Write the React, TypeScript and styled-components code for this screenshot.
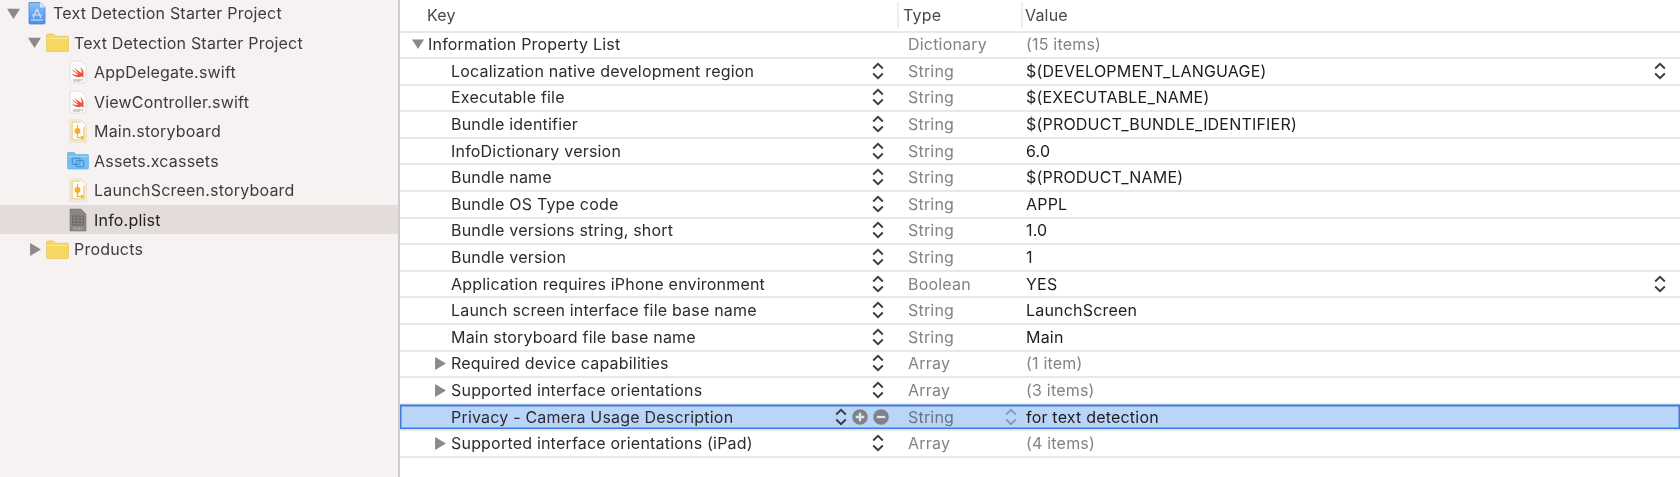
import React from "react";
import styled, { createGlobalStyle } from "styled-components";

const GlobalStyle = createGlobalStyle`
  html, body {
    margin: 0;
    padding: 0;
    background: #fff;
    font-family: "Inter", "Liberation Sans", sans-serif;
  }
`;

type FileKind = "project" | "folder" | "swift" | "storyboard" | "assets" | "plist";

const FileIcon = ({ kind }: { kind: FileKind }) => {
  if (kind === "project") {
    return (
      <svg width="18" height="24" viewBox="0 0 18 24">
        <defs>
          <linearGradient id="projectFill" x1="0" y1="0" x2="0" y2="1">
            <stop offset="0" stopColor="#8cc0f5" />
            <stop offset="1" stopColor="#4d8fe6" />
          </linearGradient>
        </defs>
        <path d="M1 1.5h11l5 5v15.5a1 1 0 0 1-1 1H2a1 1 0 0 1-1-1z" fill="url(#projectFill)" stroke="#4a86d6" strokeWidth="0.8" />
        <path d="M12 1.5v5h5z" fill="#d8e9fb" />
        <path d="M9 8l-4 9M9 8l4 9M4 14h10M3 19h12" stroke="#d5e7fb" strokeWidth="1.1" fill="none" />
      </svg>
    );
  }
  if (kind === "folder" || kind === "assets") {
    const blue = kind === "assets";
    return (
      <svg width="23" height="19" viewBox="0 0 23 19">
        <path d="M0.5 2.5a1.5 1.5 0 0 1 1.5-1.5h5.5l2 2.2H21a1.5 1.5 0 0 1 1.5 1.5V17a1.5 1.5 0 0 1-1.5 1.5H2A1.5 1.5 0 0 1 0.5 17z" fill={blue ? "#73bff3" : "#f7d661"} stroke={blue ? "#5aa9e2" : "#e3bd4a"} strokeWidth="0.6" />
        <path d="M0.8 5.4h21.4" stroke={blue ? "#a3d6f8" : "#fbe9a0"} strokeWidth="1" />
        {blue && (
          <g fill="none" stroke="#3f86c6" strokeWidth="1">
            <rect x="5.5" y="7" width="8" height="6.5" rx="0.8" />
            <rect x="9.5" y="9.5" width="8" height="6.5" rx="0.8" />
          </g>
        )}
      </svg>
    );
  }
  if (kind === "swift") {
    return (
      <svg width="18" height="24" viewBox="0 0 18 24">
        <path d="M1 1h11l5 5v17H1z" fill="#fbfbfb" stroke="#dcdcdc" strokeWidth="0.8" />
        <path d="M3.500 9.500c2.500 2 4.500 3.300 6 4.200L5.500 8c3 2.400 5.500 4 7 5 .6-1.800 0-4-1.500-6 2.800 1.800 4.300 5 3.300 8 .6 1 .7 1.800.5 2.500-1-1.200-2.300-1.200-3.300-.7-3 1-6.500-.3-8.500-3 2.300 1.300 4.600 1.500 6 .8-2.300-1.500-4-3-5.500-4.600z" fill="#ee5236" />
        <text x="9" y="21.800" textAnchor="middle" fontSize="3.400" fontFamily="Liberation Sans, sans-serif" fill="#8a8a8a">SWIFT</text>
      </svg>
    );
  }
  if (kind === "storyboard") {
    return (
      <svg width="18" height="24" viewBox="0 0 18 24">
        <path d="M1 1h11l5 5v17H1z" fill="#fdfbf2" stroke="#d8d3c2" strokeWidth="0.8" />
        <path d="M3 3h8.500M3 3v18h12V8" fill="none" stroke="#efc562" strokeWidth="1.200" />
        <path d="M8.500 6v12.500h3" stroke="#e6ad2f" strokeWidth="1.100" fill="none" />
        <circle cx="8.500" cy="12" r="2.900" fill="#eeb22e" />
        <circle cx="13" cy="18.500" r="1.600" fill="#eeb22e" />
      </svg>
    );
  }
  return (
    <svg width="18" height="24" viewBox="0 0 18 24">
      <path d="M1 1h11l5 5v17H1z" fill="#8a8786" stroke="#7b7877" strokeWidth="0.6" />
      <path d="M3.500 8h11v9h-11zM3.500 11h11M3.500 14h11M7 8v9M11 8v9" fill="none" stroke="#6a6766" strokeWidth="0.9" />
      <text x="9" y="21.500" textAnchor="middle" fontSize="3.400" fontFamily="Liberation Sans, sans-serif" fill="#c9c6c5">PLIST</text>
    </svg>
  );
};

const Triangle = ({ open, size = 13 }: { open: boolean; size?: number }) => (
  <svg width={size} height={size} viewBox="0 0 12 12">
    <path d={open ? "M0 1.500h12L6 11z" : "M1 0l10 6-10 6z"} fill="#8b8989" />
  </svg>
);

const Stepper = ({ faded }: { faded?: boolean }) => (
  <svg width="12" height="18" viewBox="0 0 12 18">
    <path d="M1.200 6.500L6 1.800l4.800 4.700M1.200 11.500L6 16.200l4.800-4.700" fill="none" stroke={faded ? "#7f9dbe" : "#3b3b3b"} strokeWidth="1.900" />
  </svg>
);

const RoundButton = ({ minus }: { minus?: boolean }) => (
  <svg width="16" height="16" viewBox="0 0 17 17">
    <circle cx="8.500" cy="8.500" r="8.300" fill="#7f8388" />
    <path d={minus ? "M4 8.500h9" : "M4 8.500h9M8.500 4v9"} stroke="#dfe6ee" strokeWidth="2.400" />
  </svg>
);

const Page = styled.div`
  display: flex;
  width: 1680px;
  height: 477px;
  overflow: hidden;
  filter: blur(0.35px);
`;

const Sidebar = styled.nav`
  width: 398px;
  flex: none;
  margin-top: -1.7px;
  background: #f5f2f1;
`;

const TreeRow = styled.div<{ $indent: number; $selected?: boolean }>`
  display: flex;
  align-items: center;
  height: 29.5px;
  padding-left: ${(p) => p.$indent}px;
  background: ${(p) => (p.$selected ? "#e3dcda" : "transparent")};
`;

const TriangleSlot = styled.span<{ $width: number }>`
  display: flex;
  width: ${(p) => p.$width}px;
  flex: none;
`;

const IconSlot = styled.span<{ $width: number }>`
  display: flex;
  justify-content: center;
  width: ${(p) => p.$width}px;
  flex: none;
`;

const TreeLabel = styled.span<{ $gap: number; $strong?: boolean }>`
  margin-left: ${(p) => p.$gap}px;
  font-size: 16px;
  letter-spacing: 0.2px;
  color: ${(p) => (p.$strong ? "#222" : "#3f3c3c")};
`;

const Main = styled.main`
  flex: 1;
  border-left: 2px solid #cdcdcd;
  background: #fff;
`;

const Columns = styled.div`
  display: grid;
  grid-template-columns: 497px 124px 1fr;
`;

const Header = styled(Columns)`
  height: 32.5px;
  box-sizing: border-box;
  border-bottom: 2px solid #e8e8e8;
  align-items: center;
  font-size: 16px;
  letter-spacing: 0.2px;
  color: #4a4747;
`;

const HeaderCell = styled.div<{ $pad: number; $divider?: boolean }>`
  height: 26px;
  line-height: 26px;
  padding-left: ${(p) => p.$pad}px;
  border-left: ${(p) => (p.$divider ? "2px solid #eeeeee" : "none")};
`;

const Row = styled(Columns)<{ $selected?: boolean }>`
  height: 26.6px;
  box-sizing: border-box;
  padding-bottom: 1px;
  border-bottom: 2px solid #e8e8e8;
  align-items: center;
  font-size: 16px;
  letter-spacing: 0.2px;
  background: ${(p) => (p.$selected ? "#b9d5f8" : "transparent")};
  box-shadow: ${(p) => (p.$selected ? "inset 0 0 0 1.5px #3f7bd9, 0 -0.5px 0 #3f7bd9" : "none")};
`;

const KeyCell = styled.div<{ $pad: number; $selected?: boolean }>`
  display: flex;
  align-items: center;
  padding-left: ${(p) => p.$pad}px;
  padding-right: ${(p) => (p.$selected ? 8 : 13)}px;
  color: #2e2c2c;
`;

const KeyText = styled.span`
  flex: 1;
  white-space: nowrap;
`;

const RowTriangle = styled.span`
  display: flex;
  margin-right: 4px;
`;

const Controls = styled.span`
  display: flex;
  align-items: center;
  gap: 5px;
`;

const TypeCell = styled.div<{ $selected?: boolean }>`
  display: flex;
  align-items: center;
  justify-content: space-between;
  padding: 0 4px 0 11px;
  color: ${(p) => (p.$selected ? "#6a7480" : "#858282")};
`;

const ValueCell = styled.div<{ $muted?: boolean }>`
  display: flex;
  align-items: center;
  justify-content: space-between;
  padding: 0 14px 0 5px;
  color: ${(p) => (p.$muted ? "#858282" : "#1f1d1d")};
`;

type Item = {
  key: string;
  type: string;
  value: string;
  expander?: "open" | "closed";
  root?: boolean;
  muted?: boolean;
  stepper?: boolean;
  selected?: boolean;
};

const items: Item[] = [
  { key: "Information Property List", type: "Dictionary", value: "(15 items)", expander: "open", root: true, muted: true },
  { key: "Localization native development region", type: "String", value: "$(DEVELOPMENT_LANGUAGE)", stepper: true },
  { key: "Executable file", type: "String", value: "$(EXECUTABLE_NAME)" },
  { key: "Bundle identifier", type: "String", value: "$(PRODUCT_BUNDLE_IDENTIFIER)" },
  { key: "InfoDictionary version", type: "String", value: "6.0" },
  { key: "Bundle name", type: "String", value: "$(PRODUCT_NAME)" },
  { key: "Bundle OS Type code", type: "String", value: "APPL" },
  { key: "Bundle versions string, short", type: "String", value: "1.0" },
  { key: "Bundle version", type: "String", value: "1" },
  { key: "Application requires iPhone environment", type: "Boolean", value: "YES", stepper: true },
  { key: "Launch screen interface file base name", type: "String", value: "LaunchScreen" },
  { key: "Main storyboard file base name", type: "String", value: "Main" },
  { key: "Required device capabilities", type: "Array", value: "(1 item)", expander: "closed", muted: true },
  { key: "Supported interface orientations", type: "Array", value: "(3 items)", expander: "closed", muted: true },
  { key: "Privacy - Camera Usage Description", type: "String", value: "for text detection", selected: true },
  { key: "Supported interface orientations (iPad)", type: "Array", value: "(4 items)", expander: "closed", muted: true },
];

const PropertyRow = ({ item }: { item: Item }) => {
  const pad = item.root ? 12 : item.expander ? 34 : 51;
  return (
    <Row $selected={item.selected}>
      <KeyCell $pad={pad} $selected={item.selected}>
        {item.expander && (
          <RowTriangle>
            <Triangle open={item.expander === "open"} size={item.root ? 12 : 13} />
          </RowTriangle>
        )}
        <KeyText>{item.key}</KeyText>
        {item.selected ? (
          <Controls>
            <Stepper />
            <RoundButton />
            <RoundButton minus />
          </Controls>
        ) : (
          !item.root && <Stepper />
        )}
      </KeyCell>
      <TypeCell $selected={item.selected}>
        {item.type}
        {item.selected && <Stepper faded />}
      </TypeCell>
      <ValueCell $muted={item.muted}>
        {item.value}
        {item.stepper && <Stepper />}
      </ValueCell>
    </Row>
  );
};

const files: [FileKind, string][] = [
  ["swift", "AppDelegate.swift"],
  ["swift", "ViewController.swift"],
  ["storyboard", "Main.storyboard"],
  ["assets", "Assets.xcassets"],
  ["storyboard", "LaunchScreen.storyboard"],
  ["plist", "Info.plist"],
];

export default function App() {
  return (
    <>
      <GlobalStyle />
      <Page>
        <Sidebar>
          <TreeRow $indent={7}>
            <TriangleSlot $width={21}><Triangle open /></TriangleSlot>
            <IconSlot $width={18}><FileIcon kind="project" /></IconSlot>
            <TreeLabel $gap={7}>Text Detection Starter Project</TreeLabel>
          </TreeRow>
          <TreeRow $indent={28}>
            <TriangleSlot $width={18}><Triangle open /></TriangleSlot>
            <IconSlot $width={23}><FileIcon kind="folder" /></IconSlot>
            <TreeLabel $gap={5}>Text Detection Starter Project</TreeLabel>
          </TreeRow>
          {files.map(([kind, name]) => (
            <TreeRow key={name} $indent={67} $selected={kind === "plist"}>
              <IconSlot $width={22}><FileIcon kind={kind} /></IconSlot>
              <TreeLabel $gap={5} $strong={kind === "plist"}>{name}</TreeLabel>
            </TreeRow>
          ))}
          <TreeRow $indent={29}>
            <TriangleSlot $width={17}><Triangle open={false} size={13} /></TriangleSlot>
            <IconSlot $width={23}><FileIcon kind="folder" /></IconSlot>
            <TreeLabel $gap={5}>Products</TreeLabel>
          </TreeRow>
        </Sidebar>
        <Main>
          <Header>
            <HeaderCell $pad={27}>Key</HeaderCell>
            <HeaderCell $pad={4} $divider>Type</HeaderCell>
            <HeaderCell $pad={2} $divider>Value</HeaderCell>
          </Header>
          {items.map((item) => (
            <PropertyRow key={item.key} item={item} />
          ))}
        </Main>
      </Page>
    </>
  );
}
